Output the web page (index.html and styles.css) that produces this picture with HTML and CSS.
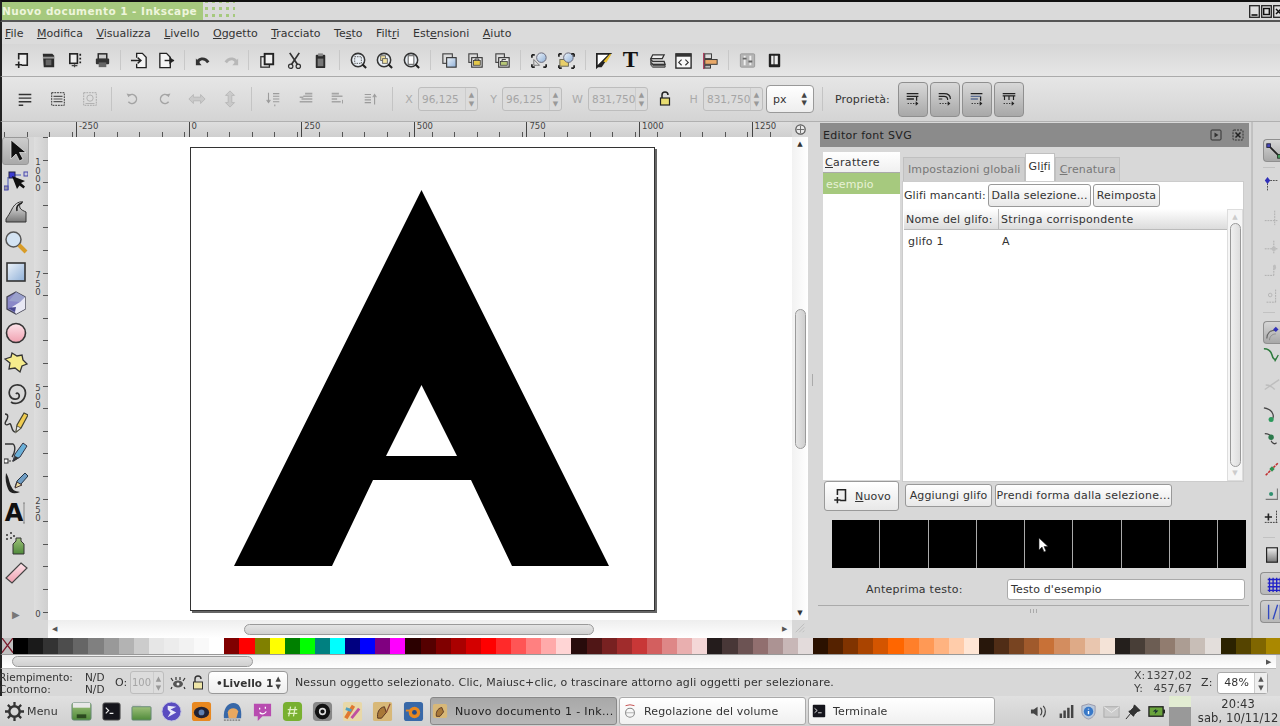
FILE: index.html
```html
<!DOCTYPE html>
<html lang="it">
<head>
<meta charset="utf-8">
<title>Nuovo documento 1 - Inkscape</title>
<link rel="stylesheet" href="styles.css">
</head>
<body>
<svg class="defs" width="0" height="0" aria-hidden="true">
<defs>
<linearGradient id="gb" x1="0" y1="0" x2="1" y2="1"><stop offset="0" stop-color="#eef4fa"/><stop offset="1" stop-color="#8fb0d8"/></linearGradient>
<linearGradient id="gp" x1="0" y1="0" x2="0" y2="1"><stop offset="0" stop-color="#fde4ea"/><stop offset="1" stop-color="#f0a0b0"/></linearGradient>
<linearGradient id="gg" x1="0" y1="0" x2="0" y2="1"><stop offset="0" stop-color="#eee"/><stop offset="1" stop-color="#777"/></linearGradient>
<linearGradient id="gt" x1="0" y1="0" x2="0" y2="1"><stop offset="0" stop-color="#9dc07a"/><stop offset="1" stop-color="#4f8a3a"/></linearGradient>
</defs>
</svg>
<div class="win">
  <header class="titlebar">
    <div class="title">Nuovo documento 1 - Inkscape</div>
    <div class="dither"></div>
    <div class="winbtns">
      <span class="wb"><svg viewBox="0 0 11 13"><rect x=".7" y=".7" width="9.6" height="11.6" fill="#ddd" stroke="#222" stroke-width="1.3"/><path d="M2.5 10h6" stroke="#111" stroke-width="1.6"/></svg></span>
      <span class="wb"><svg viewBox="0 0 11 13"><rect x=".7" y=".7" width="9.6" height="11.6" fill="#ddd" stroke="#222" stroke-width="1.3"/><rect x="2.7" y="3.5" width="5.6" height="6" fill="none" stroke="#111" stroke-width="1.4"/></svg></span>
      <span class="wb"><svg viewBox="0 0 11 13"><rect x=".7" y=".7" width="9.6" height="11.6" fill="#ddd" stroke="#222" stroke-width="1.3"/><path d="M3 4l5 5M8 4l-5 5" stroke="#111" stroke-width="1.5"/></svg></span>
    </div>
  </header>

  <nav class="menubar">
    <span><u>F</u>ile</span><span><u>M</u>odifica</span><span><u>V</u>isualizza</span><span><u>L</u>ivello</span><span><u>O</u>ggetto</span><span><u>T</u>racciato</span><span>Te<u>s</u>to</span><span>Filt<u>r</u>i</span><span>Est<u>e</u>nsioni</span><span><u>A</u>iuto</span>
  </nav>

  <div class="cmdbar">
    <i class="ti"><svg viewBox="0 0 20 20"><path d="M6 9V3h9v12H9" fill="#eee" stroke="#222" stroke-width="1.7"/><path d="M2.500 14.500h7M6 11v7" stroke="#222" stroke-width="1.700"/></svg></i>
    <i class="ti"><svg viewBox="0 0 20 20"><path d="M4 3h10l2 2v12H5z" fill="#2c2c2c"/><rect x="4" y="6" width="12" height="2" fill="#999"/><rect x="7" y="9" width="6" height="6" fill="#666"/></svg></i>
    <i class="ti"><svg viewBox="0 0 20 20"><rect x="4" y="3" width="8" height="10" fill="#eee" stroke="#222" stroke-width="1.7"/><path d="M15 3v2M15 7v2M15 11v2" stroke="#222" stroke-width="1.800"/><path d="M6 15.500h6M9 14v3" stroke="#444" stroke-width="1.300"/></svg></i>
    <i class="ti"><svg viewBox="0 0 20 20"><rect x="5.500" y="3" width="9" height="6" fill="#ccc" stroke="#222" stroke-width="1.500"/><rect x="3" y="8" width="14" height="6" rx="1" fill="#333"/><rect x="6" y="12" width="8" height="5" fill="#666"/></svg></i>
    <b class="sp"></b>
    <i class="ti"><svg viewBox="0 0 20 20"><path d="M7 7V2.500h6l4 4v11H7v-4" fill="#f4f4f4" stroke="#222" stroke-width="1.400"/><path d="M1 10h10M8 7l3.500 3L8 13" fill="none" stroke="#222" stroke-width="1.500"/></svg></i>
    <i class="ti"><svg viewBox="0 0 20 20"><path d="M3 2.500h7l4 4v11H3z" fill="#f4f4f4" stroke="#222" stroke-width="1.400"/><path d="M8 10h10" stroke="#222" stroke-width="1.500"/><path d="M13 6l5 4-5 4z" fill="#222"/></svg></i>
    <b class="sp"></b>
    <i class="ti"><svg viewBox="0 0 20 20"><path d="M4 13c0-5 7-7 11-1" fill="none" stroke="#333" stroke-width="3"/><path d="M2 8v7h6z" fill="#333"/></svg></i>
    <i class="ti dim"><svg viewBox="0 0 20 20"><path d="M16 13c0-5-7-7-11-1" fill="none" stroke="#999" stroke-width="3"/><path d="M18 8v7h-6z" fill="#999"/></svg></i>
    <b class="sp"></b>
    <i class="ti"><svg viewBox="0 0 20 20"><rect x="3" y="6" width="9" height="11" fill="#eee" stroke="#333" stroke-width="1.400"/><rect x="7" y="3" width="9" height="11" fill="#eee" stroke="#222" stroke-width="2"/></svg></i>
    <i class="ti"><svg viewBox="0 0 20 20"><path d="M5 2l8 12M15 2L7 14" stroke="#333" stroke-width="1.800"/><circle cx="6" cy="16" r="2.300" fill="none" stroke="#333" stroke-width="1.300"/><circle cx="14" cy="16" r="2.300" fill="none" stroke="#333" stroke-width="1.300"/></svg></i>
    <i class="ti"><svg viewBox="0 0 20 20"><rect x="5" y="4" width="10" height="14" rx="1" fill="#2c2c2c"/><rect x="7.500" y="2.500" width="5" height="3" fill="#888"/><rect x="7" y="8" width="6" height="8" fill="#777"/></svg></i>
    <b class="sp"></b>
    <i class="ti"><svg viewBox="0 0 20 20"><circle cx="9.500" cy="9.500" r="7" fill="#e8eef4" stroke="#333" stroke-width="1.600"/><rect x="6" y="6" width="7" height="7" fill="none" stroke="#555" stroke-dasharray="1.500 1"/><path d="M14 14l4 4" stroke="#222" stroke-width="2.200"/></svg></i>
    <i class="ti"><svg viewBox="0 0 20 20"><circle cx="9.500" cy="9.500" r="7" fill="#e8eef4" stroke="#333" stroke-width="1.600"/><rect x="6" y="5" width="5" height="5" fill="#f2e3a0" stroke="#666"/><rect x="8" y="8" width="5" height="5" fill="#f2e3a0" stroke="#666"/><path d="M14 14l4 4" stroke="#222" stroke-width="2.200"/></svg></i>
    <i class="ti"><svg viewBox="0 0 20 20"><circle cx="9.500" cy="9.500" r="7" fill="#e8eef4" stroke="#333" stroke-width="1.600"/><rect x="6.500" y="5" width="6" height="9" fill="#fff" stroke="#555"/><path d="M14 14l4 4" stroke="#222" stroke-width="2.200"/></svg></i>
    <b class="sp"></b>
    <i class="ti"><svg viewBox="0 0 20 20"><rect x="3" y="3" width="10" height="10" fill="#ddd" stroke="#444" stroke-width="1.200"/><rect x="7" y="7" width="10" height="10" fill="url(#gb)" stroke="#333" stroke-width="1.200"/></svg></i>
    <i class="ti"><svg viewBox="0 0 20 20"><rect x="3" y="3" width="9" height="9" fill="#ddd" stroke="#444" stroke-width="1.200"/><rect x="6" y="7" width="11" height="10" fill="#eee" stroke="#333" stroke-width="1.200"/><rect x="8" y="10" width="7" height="5" fill="#e4c84a" stroke="#333" stroke-width=".8"/><path d="M9.500 10V8.500h4V10" fill="none" stroke="#333"/></svg></i>
    <i class="ti"><svg viewBox="0 0 20 20"><rect x="3" y="3" width="9" height="9" fill="#ddd" stroke="#444" stroke-width="1.200"/><rect x="6" y="7" width="11" height="10" fill="#eee" stroke="#333" stroke-width="1.200"/><rect x="8" y="11" width="7" height="4" fill="#b8c878" stroke="#333" stroke-width=".8"/><path d="M9.500 11V9h4" fill="none" stroke="#333"/></svg></i>
    <b class="sp"></b>
    <i class="ti"><svg viewBox="0 0 20 20"><path d="M4 15h8" stroke="#aaa" stroke-dasharray="2 2"/><circle cx="12" cy="7" r="5" fill="url(#gb)" stroke="#667"/><path d="M2 17v-3M2 17h3M2 4h3M2 4v3M17 17h-3M17 17v-3" stroke="#222" stroke-width="1.800"/><path d="M4 9l6 6H4z" fill="#ddd" stroke="#777"/></svg></i>
    <i class="ti"><svg viewBox="0 0 20 20"><rect x="3" y="9" width="9" height="7" fill="#e8cf6a" stroke="#665"/><circle cx="12" cy="7" r="5" fill="url(#gb)" stroke="#667"/><path d="M2 18v-3M2 18h3M2 3h3M2 3v3M18 18h-3M18 18v-3M18 3h-3M18 3v3" stroke="#222" stroke-width="1.800"/></svg></i>
    <b class="sp"></b>
    <i class="ti"><svg viewBox="0 0 20 20"><path d="M3 3h14L3 17z" fill="#fff" stroke="#222" stroke-width="1.800"/><path d="M18 3L8 17H3z" fill="#222"/><path d="M17 3l1 1-5 8-3-1z" fill="#e8c030"/></svg></i>
    <i class="ti"><span class="tee">T</span></i>
    <i class="ti"><svg viewBox="0 0 20 20"><path d="M5 4h12l-2 4H3z" fill="#eee" stroke="#333" stroke-width="1.300"/><path d="M3 9l2 2h12l1 3H5l-2-2z" fill="#ccc" stroke="#333" stroke-width="1.300"/><path d="M3 13l2 2h13v2H5l-2-2z" fill="#aaa" stroke="#333"/></svg></i>
    <i class="ti"><svg viewBox="0 0 20 20"><rect x="2" y="3" width="16" height="15" fill="#f8f8f8" stroke="#222" stroke-width="1.400"/><rect x="2" y="3" width="16" height="3" fill="#333"/><path d="M8 9l-3 3 3 3M12 9l3 3-3 3" fill="none" stroke="#333" stroke-width="1.200"/></svg></i>
    <i class="ti"><svg viewBox="0 0 20 20"><path d="M3 2v17" stroke="#b04060" stroke-width="1.800"/><rect x="4" y="3" width="7" height="5" fill="#ddd" stroke="#333"/><rect x="4" y="9" width="13" height="5" fill="#e8a868" stroke="#333"/><rect x="4" y="15" width="6" height="3" fill="#bbb" stroke="#333"/></svg></i>
    <b class="sp"></b>
    <i class="ti"><svg viewBox="0 0 20 20"><rect x="2.500" y="3" width="15" height="14" rx="1" fill="#b5b5b5" stroke="#999"/><path d="M7 5v10M13 5v10" stroke="#eee" stroke-width="2"/><path d="M5 8h4M11 11h4" stroke="#666" stroke-width="2"/></svg></i>
    <i class="ti"><svg viewBox="0 0 20 20"><rect x="4" y="3" width="12" height="14" rx="1" fill="#222"/><rect x="6.500" y="5" width="2.500" height="9" fill="#eee"/><rect x="10" y="5" width="3.500" height="9" fill="#eee"/></svg></i>
  </div>

  <div class="ctlbar">
    <i class="tc"><svg viewBox="0 0 20 20"><path d="M3 5h14M3 9h14M3 13h14M3 17h5" stroke="#333" stroke-width="1.600"/></svg></i>
    <i class="tc"><svg viewBox="0 0 20 20"><rect x="3" y="3" width="14" height="14" fill="#ddd" stroke="#222" stroke-dasharray="2 1"/><path d="M5 7h10M5 10h10M5 13h10" stroke="#555" stroke-width="1.300"/></svg></i>
    <i class="tc dim"><svg viewBox="0 0 20 20"><rect x="3" y="3" width="14" height="14" fill="#ddd" stroke="#777" stroke-dasharray="2 1"/><circle cx="10" cy="9" r="3.500" fill="none" stroke="#888"/><path d="M5 15h10" stroke="#888"/></svg></i>
    <b class="spc"></b>
    <i class="tc dim"><svg viewBox="0 0 20 20"><path d="M7 6a5 5 0 1 1-1 7" fill="none" stroke="#777" stroke-width="1.600"/><path d="M4 4l5 1-3 3z" fill="#777"/></svg></i>
    <i class="tc dim"><svg viewBox="0 0 20 20"><path d="M13 6a5 5 0 1 0 1 7" fill="none" stroke="#777" stroke-width="1.600"/><path d="M16 4l-5 1 3 3z" fill="#777"/></svg></i>
    <i class="tc dim"><svg viewBox="0 0 20 20"><path d="M1 10l5-5v3h8V5l5 5-5 5v-3H6v3z" fill="#bbb" stroke="#999"/></svg></i>
    <i class="tc dim"><svg viewBox="0 0 20 20"><path d="M10 1l5 5h-3v8h3l-5 5-5-5h3V6H5z" fill="#bbb" stroke="#999"/></svg></i>
    <b class="spc spc2"></b>
    <i class="tc dim"><svg viewBox="0 0 20 20"><path d="M5 3v10M3 11l2 3 2-3M10 4h7M10 7h7M10 10h7M10 13h7M12 16v2" fill="none" stroke="#666" stroke-width="1.200"/></svg></i>
    <i class="tc dim"><svg viewBox="0 0 20 20"><path d="M9 4h8M7 7h10M5 10h12M3 13h14M3 8h4" stroke="#777" stroke-width="1.800"/></svg></i>
    <i class="tc dim"><svg viewBox="0 0 20 20"><path d="M3 4h8M3 7h12M3 10h6M3 13h10" stroke="#777" stroke-width="1.800"/><path d="M15 11v4" stroke="#666"/></svg></i>
    <i class="tc dim"><svg viewBox="0 0 20 20"><path d="M3 5h7M3 8h7M3 11h7M3 14h7" stroke="#666" stroke-width="1.200"/><path d="M14 16V5M12 8l2-3 2 3" fill="none" stroke="#666" stroke-width="1.200"/></svg></i>
    <b class="spd"></b>
    <label class="cl clx">X</label><span class="spin"><span class="val">96,125</span><span class="arr">▲<br>▼</span></span>
    <label class="cl">Y</label><span class="spin"><span class="val">96,125</span><span class="arr">▲<br>▼</span></span>
    <label class="cl clw">W</label><span class="spin"><span class="val">831,750</span><span class="arr">▲<br>▼</span></span>
    <i class="lock"><svg viewBox="0 0 16 16"><path d="M5 7V4a3 3 0 0 1 6 0" fill="none" stroke="#222" stroke-width="1.500"/><rect x="3.500" y="7" width="9" height="7" fill="#e8dc70" stroke="#222" stroke-width="1.200"/></svg></i>
    <label class="cl clh">H</label><span class="spin"><span class="val">831,750</span><span class="arr">▲<br>▼</span></span>
    <span class="combo px"><span>px</span><span class="arr2">▲<br>▼</span></span>
    <b class="spe"></b>
    <span class="prop">Proprietà:</span>
    <div class="toggles">
      <i class="tog"><svg viewBox="0 0 20 20"><path d="M3 4h13M3 7h13M3 10h8M14 7v5" fill="none" stroke="#222" stroke-width="1.400"/><path d="M4 15h11" stroke="#222" stroke-dasharray="1.500 1.500"/><path d="M13 12.500l3 2.500-3 2.500z" fill="#222"/></svg></i>
      <i class="tog"><svg viewBox="0 0 20 20"><path d="M3 4h6c4 0 7 2 7 6M3 7h6c2 0 4 1 4 4M3 10h4" fill="none" stroke="#222" stroke-width="1.300"/><path d="M4 15h11" stroke="#222" stroke-dasharray="1.500 1.500"/><path d="M13 12.500l3 2.500-3 2.500z" fill="#222"/></svg></i>
      <i class="tog"><svg viewBox="0 0 20 20"><path d="M3 4h13M14 7v5" fill="none" stroke="#222" stroke-width="1.400"/><path d="M3 7h11M3 10h8" stroke="#5a6c90" stroke-width="1.400"/><path d="M4 15h11" stroke="#222" stroke-dasharray="1.500 1.500"/><path d="M13 12.500l3 2.500-3 2.500z" fill="#222"/></svg></i>
      <i class="tog"><svg viewBox="0 0 20 20"><path d="M3 4h14M3 6.500h14M5 6v5M10 6v5M15 6v5" fill="none" stroke="#222" stroke-width="1.300"/><path d="M4 15h11" stroke="#222" stroke-dasharray="1.500 1.500"/><path d="M13 12.500l3 2.500-3 2.500z" fill="#222"/></svg></i>
    </div>
  </div>

  <main class="main">
    <div class="toprul">
      <span class="rl">-250</span><span class="rl">0</span><span class="rl">250</span><span class="rl">500</span><span class="rl">750</span><span class="rl">1000</span><span class="rl">1250</span>
    </div>
    <div class="corner"><svg viewBox="0 0 16 16"><circle cx="8" cy="8" r="5" fill="#e8e8e8" stroke="#555" stroke-width="1.300"/><path d="M8 4v8M4 8h8" stroke="#666"/></svg></div>

    <aside class="tools">
      <i class="tool on"><svg viewBox="0 0 24 24"><path d="M7 1v19l5-5 3.500 7 3.500-2-3.500-6.500H22z" fill="#111" stroke="#eee" stroke-width=".7"/></svg></i>
      <i class="tool"><svg viewBox="0 0 24 24"><path d="M4 7v13M7 5h10" stroke="#4454b8"/><rect x="5" y="2" width="6" height="6" fill="#3b3bd0" stroke="#224"/><rect x="0" y="16" width="4" height="4" fill="#99a" stroke="#44a"/><rect x="20" y="2" width="4" height="4" fill="#ccd" stroke="#44a"/><path d="M8 6l5 13 2.500-3.500 4 3 1.500-2-4-3.500 4-2z" fill="#111"/></svg></i>
      <i class="tool"><svg viewBox="0 0 24 24"><path d="M2 22v-3c2-3 4-6 6-10s6-8 11-7c-3 1-4 3-3 6 1 2 4 3 6 4v10z" fill="url(#gg)" stroke="#333"/><path d="M13 11c-1-4 1-7 5-8" fill="none" stroke="#222" stroke-width="1.500"/></svg></i>
      <i class="tool"><svg viewBox="0 0 24 24"><circle cx="9.500" cy="9.500" r="7.500" fill="#d3e3f3" stroke="#555" stroke-width="1.500"/><path d="M15 15l7 7" stroke="#d89c28" stroke-width="4"/></svg></i>
      <i class="tool"><svg viewBox="0 0 24 24"><rect x="3" y="3" width="18" height="18" fill="url(#gb)" stroke="#333" stroke-width="1.600"/></svg></i>
      <i class="tool"><svg viewBox="0 0 24 24"><path d="M12 1l9 5v12l-9 5-9-5V6z" fill="#8a88c8" stroke="#445" stroke-width="1.300"/><path d="M12 1l9 5-5 5-11-1z" fill="#9aa0cc"/><path d="M8 16l8-5 5-5v12l-9 5z" fill="#e8e8f4"/><path d="M4 17l8-1-1 5z" fill="#4a4890"/></svg></i>
      <i class="tool"><svg viewBox="0 0 24 24"><circle cx="12" cy="12" r="9.500" fill="url(#gp)" stroke="#333" stroke-width="1.600"/></svg></i>
      <i class="tool"><svg viewBox="0 0 24 24"><path d="M8 2l5 3 5-1 1 5 4 4-5 2-2 6-5-4-6 1 1-6-5-4 6-2z" fill="#f6ec8c" stroke="#333" stroke-width="1.300"/></svg></i>
      <i class="tool"><svg viewBox="0 0 24 24"><path d="M12 13c1-2 4 0 3 3s-7 3-9-1 0-10 6-11 11 4 9 11-10 9-14 6" fill="none" stroke="#333" stroke-width="1.700"/></svg></i>
      <i class="tool"><svg viewBox="0 0 24 24"><path d="M1 3c4 0 3 4 1 7s0 5 3 3 2 8 6 8" fill="none" stroke="#333" stroke-width="1.400"/><path d="M12 21l1-7 7-12 4 2-7 13z" fill="#f0cc50" stroke="#443" stroke-width="1.200"/><path d="M12 21l1-6 4 2z" fill="#eee" stroke="#443" stroke-width=".8"/></svg></i>
      <i class="tool"><svg viewBox="0 0 24 24"><path d="M1 3h8c3 2 2 9-1 13" fill="none" stroke="#333" stroke-width="1.400"/><path d="M2 20h7" stroke="#333" stroke-dasharray="2 1"/><rect x="0" y="18" width="4" height="4" fill="#fff" stroke="#222"/><path d="M9 20l2-7 8-11 4 3-7 11z" fill="#6ab0d8" stroke="#334"/><path d="M9 21l2-6 4 2z" fill="#333"/></svg></i>
      <i class="tool"><svg viewBox="0 0 24 24"><path d="M2 2c3 4 3 9 5 13s3 5 9 6c-5 2-10 2-12-3S1 8 2 2z" fill="#222"/><path d="M11 16l2-6 8-8 3 3-7 8z" fill="#6f9dc4" stroke="#234"/><path d="M11 17l2-6 5 3z" fill="#e8d8a0" stroke="#433"/></svg></i>
      <i class="tool"><span class="aglyph">A</span><svg class="caret" viewBox="0 0 4 22"><path d="M1 1h2M2 1v20M1 21h2" stroke="#888"/></svg></i>
      <i class="tool"><svg viewBox="0 0 24 24"><path d="M2 4h2M6 2h2M2 8h2M6 7h2M9 5h2" stroke="#333" stroke-width="1.400"/><path d="M12 10V7h5v3l3 3v10H9V13z" fill="url(#gt)" stroke="#333"/></svg></i>
      <i class="tool"><svg viewBox="0 0 24 24"><path d="M17 2l6 5L8 22l-6-5z" fill="url(#gp)" stroke="#444" stroke-width="1.200"/></svg></i>
      <i class="toolmore">▶</i>
    </aside>

    <div class="vrul"><span class="vl">1<br>0<br>0<br>0</span><span class="vl">7<br>5<br>0</span><span class="vl">5<br>0<br>0</span><span class="vl">2<br>5<br>0</span><span class="vl">0</span></div>

    <section class="canvas">
      <div class="page"></div>
      <svg class="artwork" viewBox="0 0 376 377"><path fill-rule="evenodd" d="M187.500 0L375 376h-97l-41-86h-98l-41 86H0zM187.500 195l-35.500 71h71z" fill="#000"/></svg>
    </section>

    <div class="vscroll"><span class="sa">▲</span><span class="vthumb"></span><span class="sa sb">▼</span></div>
    <div class="hscroll"><span class="sh">◀</span><span class="hthumb"></span><span class="sh sr">▶</span></div>
    <div class="sizer"><svg viewBox="0 0 14 14"><path d="M12 2L2 12M12 6l-6 6M12 10l-2 2" stroke="#bbb"/></svg></div>

    <div class="handle"></div>

    <section class="dock">
      <div class="docktitle"><span>Editor font SVG</span>
        <span class="dtb"><svg viewBox="0 0 12 12"><rect x="1" y="1" width="10" height="10" rx="1" fill="none" stroke="#333"/><path d="M4.500 3.500l4 2.500-4 2.500z" fill="#333"/></svg><svg viewBox="0 0 12 12"><rect x="1" y="1" width="10" height="10" rx="1" fill="none" stroke="#333" stroke-dasharray="2 1"/><path d="M3.500 3.500l5 5M8.500 3.500l-5 5" stroke="#222" stroke-width="1.500"/></svg></span>
      </div>
      <div class="dockbody">
        <div class="leftcol">
          <div class="fontlist">
            <div class="flhead"><u>C</u>arattere</div>
            <div class="flsel">esempio</div>
          </div>
          <button class="btn nuovo"><svg viewBox="0 0 20 20"><path d="M6 9V3h9v12H9" fill="#eee" stroke="#222" stroke-width="1.700"/><path d="M2.500 14.500h7M6 11v7" stroke="#222" stroke-width="1.700"/></svg><span><u>N</u>uovo</span></button>
        </div>
        <div class="rightcol">
          <div class="tabs">
            <span class="tab">Impostazioni globali</span><span class="tab act">Gl<u>i</u>fi</span><span class="tab"><u>C</u>renatura</span>
          </div>
          <div class="panel">
            <div class="missing"><span class="mlabel">Glifi mancanti:</span><button class="btn">Dalla selezione...</button><button class="btn">Reimposta</button></div>
            <div class="table">
              <div class="tblmain">
                <div class="thead"><span class="c1">Nome del glifo:</span><span class="c2">Stringa corrispondente</span></div>
                <div class="trow"><span class="c1">glifo 1</span><span class="c2">A</span></div>
              </div>
              <div class="tscroll"><span class="sa">▲</span><span class="tthumb"></span><span class="sa sb">▼</span></div>
            </div>
          </div>
          <div class="actions"><button class="btn">Aggiungi glifo</button><button class="btn">Prendi forma dalla selezione...</button></div>
        </div>
      </div>
      <div class="strip">
        <span></span><span></span><span></span><span></span><span></span><span></span><span></span><span></span><span></span>
        <svg class="cursor" viewBox="0 0 10 16"><path d="M1 1v12l3-3 2 5 2-1-2-4.500h4z" fill="#fff" stroke="#222" stroke-width=".6"/></svg>
      </div>
      <div class="previewrow"><label>Anteprima testo:</label><span class="entry">Testo d'esempio</span></div>
      <div class="dockfoot"><span class="grip"></span></div>
    </section>

    <aside class="snapbar">
      <i class="rb on r0"><svg viewBox="0 0 20 20"><path d="M4 4l12 12" stroke="#222" stroke-width="2"/><rect x="2" y="2" width="4" height="4" fill="#4848c0" stroke="#223"/><rect x="14" y="14" width="4" height="4" fill="#48a060" stroke="#232"/></svg></i>
      <b class="rs r4"></b>
      <i class="rb r8"><svg viewBox="0 0 20 20"><path d="M5 5h11M5 5v12" stroke="#444" stroke-dasharray="2 1"/><path d="M5 1l3 4-3 4-3-4z" fill="#3030b8"/></svg></i>
      <i class="rb r14 fade"><svg viewBox="0 0 20 20"><path d="M2 14h14M13 3v16" stroke="#888" stroke-dasharray="2 1"/></svg></i>
      <i class="rb r12 fade"><svg viewBox="0 0 20 20"><path d="M2 12h14M12 3v14" stroke="#888" stroke-dasharray="2 1"/><circle cx="12" cy="12" r="2.500" fill="#aaa"/></svg></i>
      <i class="rb r5 fade"><svg viewBox="0 0 20 20"><path d="M2 16h10M12 5v11" stroke="#888" stroke-dasharray="2 1"/><ellipse cx="13" cy="7" rx="1.500" ry="3" fill="#aaa"/></svg></i>
      <i class="rb r7 fade"><svg viewBox="0 0 20 20"><path d="M4 18h10M14 4v14" stroke="#888" stroke-dasharray="2 1"/><circle cx="8" cy="10" r="2" fill="none" stroke="#999"/></svg></i>
      <b class="rs r8"></b>
      <i class="rb on r8"><svg viewBox="0 0 20 20"><path d="M2 16c0-6 4-9 9-9" fill="none" stroke="#666" stroke-width="1.300"/><path d="M5 18c0-4 3-7 7-7" fill="none" stroke="#888"/><path d="M12 3l3 3-3 3-3-3z" fill="#3030b8"/></svg></i>
      <i class="rb r0"><svg viewBox="0 0 20 20"><path d="M1 3c6 0 8 3 9 7s3 6 4 4" fill="none" stroke="#2c7a3c" stroke-width="1.700"/><path d="M13 17l4-7" stroke="#2c7a3c" stroke-width="1.500"/></svg></i>
      <i class="rb r12 fade"><svg viewBox="0 0 20 20"><path d="M2 15L18 4M3 10c5 0 7 2 10 5" fill="none" stroke="#aaa" stroke-width="1.500"/></svg></i>
      <i class="rb r12"><svg viewBox="0 0 20 20"><path d="M1 2c6 1 9 4 10 7s0 5-1 6" fill="none" stroke="#444" stroke-width="1.400"/><circle cx="9" cy="15" r="2.800" fill="#2c9a5c"/></svg></i>
      <i class="rb r6"><svg viewBox="0 0 20 20"><path d="M2 4c4 0 7 2 8 5M9 12c1 2 4 5 6 2" fill="none" stroke="#444" stroke-width="1.400"/><circle cx="9" cy="8" r="3" fill="#2c7a4c"/></svg></i>
      <i class="rb r12"><svg viewBox="0 0 20 20"><path d="M3 17L17 3" stroke="#c03030" stroke-width="1.700" stroke-dasharray="3 1"/><path d="M10 7l3 3-3 3-3-3z" fill="#309050"/></svg></i>
      <i class="rb r7"><svg viewBox="0 0 20 20"><path d="M3 16h13V4" fill="none" stroke="#777" stroke-width="1.200"/><circle cx="9" cy="10" r="2.300" fill="#309070"/></svg></i>
      <i class="rb r5"><svg viewBox="0 0 20 20"><path d="M2 10h8M6 6v8" stroke="#222" stroke-width="1.800"/><path d="M2 16h14M15 3v13" stroke="#333" stroke-dasharray="2 1"/></svg></i>
      <b class="rs r11"></b>
      <i class="rb r8"><svg viewBox="0 0 20 20"><rect x="4" y="2" width="12" height="16" fill="url(#gg)" stroke="#222" stroke-width="1.300"/></svg></i>
      <i class="rb on r8 blue"><svg viewBox="0 0 20 20"><path d="M3 5h16M3 9h16M3 13h16M3 17h16M5 3v16M9 3v16M13 3v16M17 3v16" stroke="#2020c8" stroke-width="1.500"/></svg></i>
      <i class="rb on r5 blue"><svg viewBox="0 0 20 20"><path d="M4 2v16M9 18l5-16M17 2v16" stroke="#3048c0" stroke-width="1.500"/></svg></i>
    </aside>
  </main>

  <div class="palette">
    <span class="noswatch"><svg viewBox="0 0 12 16"><path d="M0 0l12 16M12 0L0 16" stroke="#7a1a2a" stroke-width="1.400"/></svg></span>
    <span style="background:#000"></span><span style="background:#1a1a1a"></span><span style="background:#333"></span><span style="background:#4d4d4d"></span><span style="background:#666"></span><span style="background:#808080"></span><span style="background:#999"></span><span style="background:#b3b3b3"></span><span style="background:#ccc"></span><span style="background:#e6e6e6"></span><span style="background:#ececec"></span><span style="background:#f2f2f2"></span><span style="background:#f9f9f9"></span><span style="background:#fff"></span>
    <span style="background:#800000"></span><span style="background:#f00"></span><span style="background:#808000"></span><span style="background:#ff0"></span><span style="background:#008000"></span><span style="background:#0f0"></span><span style="background:#008080"></span><span style="background:#0ff"></span><span style="background:#000080"></span><span style="background:#00f"></span><span style="background:#800080"></span><span style="background:#f0f"></span>
    <span style="background:#2b0000"></span><span style="background:#550000"></span><span style="background:#800000"></span><span style="background:#aa0000"></span><span style="background:#d40000"></span><span style="background:#f00"></span><span style="background:#ff2a2a"></span><span style="background:#f55"></span><span style="background:#ff8080"></span><span style="background:#faa"></span><span style="background:#ffd5d5"></span>
    <span style="background:#280b0b"></span><span style="background:#501616"></span><span style="background:#782121"></span><span style="background:#a02c2c"></span><span style="background:#c83737"></span><span style="background:#d35f5f"></span><span style="background:#de8787"></span><span style="background:#e9afaf"></span><span style="background:#f4d7d7"></span>
    <span style="background:#241c1c"></span><span style="background:#483737"></span><span style="background:#6c5353"></span><span style="background:#916f6f"></span><span style="background:#ac9393"></span><span style="background:#c8b7b7"></span><span style="background:#e3dbdb"></span>
    <span style="background:#2b1100"></span><span style="background:#552200"></span><span style="background:#803300"></span><span style="background:#aa4400"></span><span style="background:#d45500"></span><span style="background:#f60"></span><span style="background:#ff7f2a"></span><span style="background:#f95"></span><span style="background:#ffb380"></span><span style="background:#fca"></span><span style="background:#ffe6d5"></span>
    <span style="background:#28170b"></span><span style="background:#502d16"></span><span style="background:#784421"></span><span style="background:#a05a2c"></span><span style="background:#c87137"></span><span style="background:#d38d5f"></span><span style="background:#deaa87"></span><span style="background:#e9c6af"></span><span style="background:#f4e3d7"></span>
    <span style="background:#241f1c"></span><span style="background:#483e37"></span><span style="background:#6c5d53"></span><span style="background:#917c6f"></span><span style="background:#ac9d93"></span><span style="background:#c8beb7"></span><span style="background:#e3dedb"></span>
    <span style="background:#2b2200"></span><span style="background:#554400"></span><span style="background:#806600"></span><span style="background:#aa8800"></span>
  </div>
  <div class="palscroll"><span class="palthumb"></span><span class="sh palarrow">▶</span></div>

  <div class="status">
    <div class="fs"><div><span>Riempimento:</span><span>N/D</span></div><div><span>Contorno:</span><span>N/D</span></div></div>
    <label class="op">O:</label><span class="spin small"><span class="val">100</span><span class="arr">▲<br>▼</span></span>
    <i class="si eye"><svg viewBox="0 0 16 16"><ellipse cx="8" cy="9" rx="5" ry="3.500" fill="#555"/><circle cx="8" cy="9" r="1.500" fill="#eee"/><path d="M3 6L1 3M6 5V2M10 5V2M13 6l2-3M2 12l-1 2M14 12l1 2" stroke="#333" stroke-width="1.200"/></svg></i>
    <i class="si lock2"><svg viewBox="0 0 16 16"><path d="M5 7V4a3 3 0 0 1 6 0" fill="none" stroke="#333" stroke-width="1.400"/><rect x="3.500" y="7" width="9" height="7" fill="#efe6a8" stroke="#333"/></svg></i>
    <span class="combo lvl"><span>•Livello 1</span><span class="arr2">▲<br>▼</span></span>
    <span class="msg">Nessun oggetto selezionato. Clic, Maiusc+clic, o trascinare attorno agli oggetti per selezionare.</span>
    <div class="coords"><div><span>X:</span><span>1327,02</span></div><div><span>Y:</span><span>457,67</span></div></div>
    <label class="zl">Z:</label>
    <span class="zoomspin"><span>48%</span><span class="arr">▲<br>▼</span></span>
  </div>

  <footer class="taskbar">
    <span class="menubtn"><svg viewBox="0 0 20 20"><circle cx="10" cy="10" r="5.500" fill="none" stroke="#333" stroke-width="2.600"/><path d="M10 0v4M10 16v4M0 10h4M16 10h4M3 3l3 3M14 14l3 3M17 3l-3 3M6 14l-3 3" stroke="#333" stroke-width="2.400"/></svg>Menu</span>
    <div class="launch">
      <i class="la"><svg viewBox="0 0 22 22"><rect x="1" y="2" width="20" height="18" rx="2" fill="url(#gt)" stroke="#687"/><rect x="2" y="2" width="18" height="5" fill="#e8e8e8"/><rect x="6" y="14" width="10" height="4" fill="#2c4a20"/></svg></i>
      <i class="la"><svg viewBox="0 0 22 22"><rect x="2" y="2" width="18" height="18" rx="2" fill="#15151c" stroke="#555"/><path d="M5 7l3 3-3 3M9 13h4" fill="none" stroke="#eee" stroke-width="1.200"/></svg></i>
      <i class="la"><svg viewBox="0 0 22 22"><path d="M1 7h8l2-3H1z" fill="#ccc"/><rect x="1" y="6" width="20" height="14" rx="1" fill="url(#gt)" stroke="#687"/></svg></i>
      <i class="la"><svg viewBox="0 0 22 22"><circle cx="11" cy="11" r="10" fill="#5a4cc0" stroke="#c0c0e0"/><path d="M7 5l9 1-6 3 6 3-9 5 3-5-3-3z" fill="#e8e8f8"/></svg></i>
      <i class="la"><svg viewBox="0 0 22 22"><rect x="1" y="1" width="20" height="20" rx="3" fill="#e88820"/><ellipse cx="11" cy="12" rx="8" ry="6" fill="#223"/><circle cx="11" cy="12" r="3" fill="#6080b0"/></svg></i>
      <i class="la"><svg viewBox="0 0 22 22"><path d="M2 18C1 8 6 2 12 2s9 5 8 16z" fill="#3868a8"/><path d="M6 12c1-5 9-6 11-1l-2 7H7z" fill="#e8a860"/><path d="M2 20h18" stroke="#555" stroke-dasharray="2 1"/></svg></i>
      <i class="la"><svg viewBox="0 0 22 22"><path d="M2 3h18v13H11l-5 5v-5H2z" fill="#b84cb0"/><path d="M8 7v2M8 12c2 2 5 2 7-1M14 6v2" stroke="#fff" stroke-width="1.300" fill="none"/></svg></i>
      <i class="la"><svg viewBox="0 0 22 22"><rect x="1" y="1" width="20" height="20" rx="4" fill="#78b030"/><path d="M9 6l-2 10M14 6l-2 10M6 9h10M6 13h10" stroke="#dff0c0" stroke-width="1.300"/></svg></i>
      <i class="la"><svg viewBox="0 0 22 22"><rect x="1" y="1" width="20" height="20" rx="4" fill="#888"/><circle cx="11" cy="11" r="8" fill="#111"/><circle cx="11" cy="11" r="3" fill="none" stroke="#ddd" stroke-width="1.600"/></svg></i>
      <i class="la"><svg viewBox="0 0 22 22"><rect x="1" y="1" width="20" height="20" rx="2" fill="#e8d8a8"/><path d="M4 18L12 5" stroke="#e07830" stroke-width="4"/><path d="M10 18L18 8" stroke="#c050a0" stroke-width="3"/><path d="M4 8l6 2" stroke="#50a0c0" stroke-width="3"/></svg></i>
      <i class="la"><svg viewBox="0 0 22 22"><rect x="1" y="1" width="20" height="20" rx="2" fill="#d8b878"/><path d="M6 18c-1-5 1-11 7-12l2 6-5 6z" fill="#a87838" stroke="#532"/><path d="M15 12l4-9" stroke="#843" stroke-width="1.300"/></svg></i>
      <i class="la"><svg viewBox="0 0 22 22"><rect x="1" y="1" width="20" height="20" rx="3" fill="#3868a8"/><circle cx="12" cy="12" r="6" fill="#e88820"/><circle cx="12" cy="12" r="2.500" fill="#244a88"/><path d="M3 10h6" stroke="#e88820" stroke-width="2"/></svg></i>
    </div>
    <div class="tasks">
      <span class="task act"><svg viewBox="0 0 18 18"><rect x="1" y="1" width="16" height="16" rx="2" fill="#d8b878"/><path d="M5 15c-1-4 1-9 6-10l2 5-4 5z" fill="#a87838" stroke="#532"/></svg>Nuovo documento 1 - Ink...</span>
      <span class="task"><svg viewBox="0 0 18 18"><circle cx="9" cy="11" r="5" fill="none" stroke="#888" stroke-width="1.200"/><path d="M4 3l5-1 5 1" stroke="#c04040" fill="none"/><path d="M4 11h10" stroke="#aaa"/></svg>Regolazione del volume</span>
      <span class="task"><svg viewBox="0 0 18 18"><rect x="2" y="2" width="14" height="14" rx="1" fill="#15151c"/><path d="M4 6l3 2.500L4 11M8 11h4" fill="none" stroke="#eee"/></svg>Terminale</span>
    </div>
    <div class="tray">
      <i class="ty"><svg viewBox="0 0 18 18"><path d="M1 7h3l4-3v10l-4-3H1z" fill="#444"/><path d="M11 5c2 2 2 6 0 8M14 3c3 3 3 9 0 12" fill="none" stroke="#444" stroke-width="1.300"/></svg></i>
      <i class="ty ty2"><svg viewBox="0 0 18 18"><path d="M3 11v5M7 8v8M11 5v11M15 2v14" stroke="#444" stroke-width="2.600"/></svg></i>
      <i class="ty"><svg viewBox="0 0 18 18"><path d="M9 1l7 2v6c0 4-3 7-7 8-4-1-7-4-7-8V3z" fill="#b8c8dc" stroke="#99a"/><circle cx="9" cy="9" r="5" fill="#3878c8"/><path d="M9 6v1M9 8.500V12" stroke="#fff" stroke-width="1.500"/></svg></i>
      <i class="ty"><svg viewBox="0 0 18 18"><rect x="1" y="4" width="16" height="11" fill="#ccc" stroke="#aaa"/><path d="M1 4l8 6 8-6" fill="none" stroke="#eee"/></svg></i>
      <i class="ty"><svg viewBox="0 0 18 18"><path d="M10 2l6 6-3 1-3 3-1 2-5-5 2-1 3-3zM6 11l-5 6" fill="#333" stroke="#222"/></svg></i>
      <i class="ty"><svg viewBox="0 0 18 18"><rect x="1" y="4" width="15" height="10" fill="#6aa43c" stroke="#222" stroke-width="1.400"/><rect x="16" y="7" width="2" height="4" fill="#222"/><path d="M5 9h3l-1 3 4-4H8l1-2z" fill="#123"/></svg></i>
      <span class="pager"><b></b><b></b></span>
    </div>
    <div class="clock"><div>20:43</div><div>sab, 10/11/12</div></div>
  </footer>
</div>
</body>
</html>
```
FILE: styles.css
```css
*{box-sizing:border-box}
html,body{margin:0;padding:0}
body{width:1280px;height:726px;overflow:hidden;background:#d8d8d8;font-family:"DejaVu Sans",sans-serif;font-size:11px;letter-spacing:.14px;color:#333}
i,b{font-style:normal;font-weight:normal}
svg{display:block}
.defs{position:absolute}
u{text-decoration-thickness:1px;text-underline-offset:1px}
.win{width:1280px;height:726px;display:flex;flex-direction:column;overflow:hidden;filter:blur(.3px)}

.titlebar{height:22px;flex:none;display:flex;align-items:stretch;background:#dadada;border-top:2px solid #111;border-bottom:2px solid #555;border-left:2px solid #222}
.title{width:201px;background:#a6c97e;color:#eef5dc;font-weight:bold;font-size:10.500px;letter-spacing:.45px;line-height:18px;white-space:nowrap}
.dither{width:32px;background-image:radial-gradient(#a6c97e 30%,transparent 40%);background-size:7px 7px;background-position:0 3px}
.winbtns{margin-left:auto;display:flex;gap:1px;padding-top:3px}
.wb{width:11px;height:13px}
.winbtns .wb:last-child{width:7px;overflow:hidden}
.wb svg{width:11px;height:13px}

.menubar{height:22px;flex:none;display:flex;align-items:center;gap:13.500px;padding-left:3px;background:#dbdbdb;border-left:2px solid #222;white-space:nowrap;letter-spacing:0}
.cmdbar{height:33px;flex:none;display:flex;align-items:center;padding-left:7px;background:linear-gradient(#d6d6d6,#e6e6e6);border-left:2px solid #222;border-bottom:1px solid #ababab}
.ti{width:26.600px;height:26px;flex:none;display:flex;align-items:center;justify-content:center}
.ti svg{width:19px;height:19px}
.sp{width:10.900px;flex:none;height:20px;background:linear-gradient(#c8c8c8,#c8c8c8) center/1px 100% no-repeat}
.dim{opacity:.55}
.tee{font-family:"Liberation Serif",serif;font-weight:bold;font-size:23px;line-height:26px;color:#111}

.ctlbar{height:45px;flex:none;display:flex;align-items:center;padding-left:7px;background:linear-gradient(#e6e6e6,#d4d4d4);border-left:2px solid #222;border-bottom:1px solid #b0b0b0}
.tc{width:32.500px;flex:none;display:flex;justify-content:center}
.tc svg{width:18px;height:18px}
.spc{width:9.500px;flex:none;height:24px;background:linear-gradient(#c4c4c4,#c4c4c4) center/1px 100% no-repeat}
.spc2{width:11px}
.spd{width:11px;flex:none;height:24px;background:linear-gradient(#c4c4c4,#c4c4c4) center/1px 100% no-repeat}
.cl{width:24px;padding-right:5px;text-align:right;color:#aaa;flex:none}
.clx{width:20px}
.clw{width:26px}
.clh{width:30px}
.spin{display:flex;width:60px;height:24px;border:1px solid #bdbdbd;border-radius:3px;color:#a5a5a5;background:#dcdcdc;overflow:hidden;flex:none}
.val{width:46px;padding-left:3px;line-height:22px;font-size:10.500px;letter-spacing:0;overflow:hidden;white-space:nowrap;flex:none}
.arr{flex:1;font-size:7px;line-height:9px;text-align:center;padding-top:3px;border-left:1px solid #ccc;color:#999}
.lock{width:16px;margin-left:9px;flex:none}
.combo{display:flex;justify-content:space-between;align-items:center;background:linear-gradient(#fff,#eee);border:1px solid #999;border-radius:4px;color:#333;flex:none}
.px{width:48px;height:28px;margin-left:3px;padding:0 6px}
.arr2{font-size:7px;line-height:8px;text-align:center;color:#444}
.spe{width:17px;flex:none;height:24px;background:linear-gradient(#c4c4c4,#c4c4c4) center/1px 100% no-repeat}
.prop{width:63px;margin-left:4px;flex:none}
.toggles{display:flex;gap:2px}
.tog{width:30px;height:35px;border:1px solid #8f8f8f;border-radius:4px;background:linear-gradient(#d8d8d8,#a8a8a8);display:flex;align-items:center;justify-content:center}
.tog svg{width:18px;height:18px}

.main{height:516px;flex:none;display:grid;grid-template-columns:32px 14px 744px 16px 8px 436px 28px;grid-template-rows:15px 483px 18px;background:#d8d8d8;border-left:2px solid #222}
.toprul{grid-column:1/4;grid-row:1;display:flex;padding-left:74px;font-size:8.500px;letter-spacing:0;line-height:9px;color:#444;background:repeating-linear-gradient(90deg,#555 0,#555 1px,transparent 1px,transparent 22.520px) 2px 100%/100% 5px no-repeat,linear-gradient(#dedede,#cfcfcf);overflow:hidden}
.rl{width:112.600px;flex:none;height:15px;padding-left:2px;border-left:1px solid #444}
.corner{grid-column:4;grid-row:1;display:flex;justify-content:center;align-items:center;background:#d8d8d8}
.corner svg{width:15px;height:15px}

.tools{grid-column:1;grid-row:2/4;display:flex;flex-direction:column;align-items:flex-start;background:#d8d8d8}
.tool{width:27px;height:30.100px;flex:none;display:flex;align-items:center;justify-content:center}
.tool svg{width:24px;height:24px}
.tool.on{height:28px;margin-bottom:2.100px;background:linear-gradient(#cdcdcd,#a9a9a9);border:1px solid #999;border-radius:3px}
.aglyph{font-weight:bold;font-size:24px;line-height:24px;color:#111}
.tool svg.caret{width:4px;height:22px;margin-left:-1px}
.toolmore{font-size:10px;color:#777;margin:21px 0 0 10px}

.vrul{grid-column:2;grid-row:2;display:flex;flex-direction:column;padding:21px 0 0 0;background:repeating-linear-gradient(180deg,#555 0,#555 1px,transparent 1px,transparent 22.600px) 100% 0/5px 100% no-repeat,linear-gradient(90deg,#dedede,#cfcfcf);font-size:8.500px;letter-spacing:0;line-height:8.500px;color:#444;overflow:hidden}
.vl{height:113px;flex:none;text-align:center;width:8px}

.canvas{grid-column:3;grid-row:2;background:#fff;position:relative;overflow:hidden}
.page{position:absolute;left:142px;top:10px;width:465px;height:464px;background:#fff;border:1px solid #333;box-shadow:2px 2px 0 #666}
.artwork{position:absolute;left:186px;top:53px;width:376px;height:377px}

.vscroll{grid-column:4;grid-row:2;display:flex;flex-direction:column;align-items:center;background:linear-gradient(90deg,#f2f2f2,#fff)}
.sa{font-size:7px;line-height:10px;color:#333;height:10px;margin-top:2px}
.sb{margin-top:auto;margin-bottom:2px}
.vthumb{width:11px;height:140px;margin-top:160px;background:linear-gradient(90deg,#e4e4e4,#cfcfcf);border:1px solid #9a9a9a;border-radius:6px}
.hscroll{grid-column:3;grid-row:3;display:flex;align-items:center;padding-left:4px;background:linear-gradient(#eee,#fff)}
.sh{font-size:7px;color:#555;width:10px;flex:none}
.hthumb{width:350px;height:11px;margin-left:182px;background:linear-gradient(#e4e4e4,#d0d0d0);border:1px solid #9a9a9a;border-radius:6px}
.sr{margin-left:auto;margin-right:0}
.sizer{grid-column:4;grid-row:3;padding:2px;background:#d8d8d8}
.handle{grid-column:5;grid-row:1/4;background:linear-gradient(#aaa,#aaa) 50% 50%/1px 12px no-repeat}

.dock{grid-column:6;grid-row:1/4;display:flex;flex-direction:column;background:#d8d8d8;border-right:1px solid #c2c2c2}
.docktitle{height:24px;margin:1px 2px 0 4px;flex:none;background:#8b8b8b;display:flex;align-items:center;justify-content:space-between;padding:0 5px 0 3px;color:#222;letter-spacing:.3px}
.dtb{display:flex;gap:10px}
.dtb svg{width:12px;height:12px}
.dockbody{display:flex;margin-top:5px;padding-left:7px;height:358px;flex:none}
.leftcol{width:77px;flex:none}
.fontlist{height:328px;background:#fff;border-radius:2px 2px 0 0}
.flhead{height:21px;line-height:22px;padding-left:2px;border-bottom:1px solid #aaa;background:linear-gradient(#fff,#f0f0f0);letter-spacing:.3px}
.flsel{height:21px;line-height:23px;padding-left:3px;background:#a6c97e;color:#e8f2d6}
.btn{font:inherit;letter-spacing:inherit;color:#333;background:linear-gradient(#fff,#e8e8e8);border:1px solid #999;border-radius:3px;padding:0;height:23px;white-space:nowrap}
.nuovo{display:flex;align-items:center;justify-content:center;gap:5px;width:75px;height:30px;margin:1px 0 0 1px}
.nuovo svg{width:18px;height:18px}
.rightcol{width:342px;margin-left:2px;flex:none}
.tabs{height:29px;display:flex;align-items:flex-end;padding-left:1px}
.tab{height:24px;line-height:24px;padding:0 3px 0 4px;background:#cfcfcf;color:#777;border:1px solid #c0c0c0;border-bottom:0;white-space:nowrap;letter-spacing:.12px}
.tab.act{height:28px;line-height:25px;background:#fff;color:#333;padding:0 3px}
.panel{height:301px;background:#fff;border:1px solid #ccc;padding:2px 0 0 1px;display:flex;flex-direction:column}
.missing{display:flex;align-items:center;gap:2px;white-space:nowrap;flex:none}
.mlabel{width:83px;flex:none;margin-right:-1px;letter-spacing:.1px}
.missing .btn:nth-child(2){width:103px}
.missing .btn:nth-child(3){width:67px}
.table{display:flex;flex:1;margin-top:2px;min-height:0}
.tblmain{width:323px;flex:none}
.thead{display:flex;height:21px;line-height:22px;background:linear-gradient(#fff,#dcdcdc);border-bottom:1px solid #bbb}
.c1{width:94px;padding-left:2px;flex:none;letter-spacing:.2px}
.thead .c2{border-left:1px solid #bbb;padding-left:2px;letter-spacing:.3px}
.trow{display:flex;height:22px;line-height:24px}
.trow .c1{padding-left:4px}
.trow .c2{padding-left:4px}
.tscroll{width:16px;flex:none;display:flex;flex-direction:column;align-items:center;border:1px solid #ddd;background:#f6f6f6}
.tscroll .sa{color:#ccc}
.tthumb{width:11px;height:244px;margin-top:1px;background:linear-gradient(90deg,#f0f0f0,#ddd);border:1px solid #999;border-radius:6px}
.actions{display:flex;gap:3px;margin-top:2px;padding-left:3px}
.actions .btn:first-child{width:87px}
.actions .btn:last-child{width:177px;letter-spacing:.25px}
.strip{height:48px;width:414px;margin:10px 0 0 16px;background:#000;display:flex;position:relative;flex:none;overflow:hidden}
.strip span{width:48.250px;flex:none;border-right:1px solid #aaa}
.strip span:last-of-type{border:0}
.cursor{position:absolute;left:206px;top:17px;width:10px;height:16px}
.previewrow{display:flex;align-items:center;margin-top:11px;padding-left:50px;flex:none}
.previewrow label{width:141px;flex:none;letter-spacing:.25px}
.entry{width:238px;height:21px;line-height:20px;background:#fff;border:1px solid #aaa;border-radius:3px;padding-left:3px}
.dockfoot{margin:5px 2px 0 2px;border-top:1px solid #aaa;display:flex;justify-content:center;padding-top:3px}
.grip{width:7px;height:4px;background:repeating-linear-gradient(90deg,#aaa 0,#aaa 1px,transparent 1px,transparent 3px)}

.snapbar{grid-column:7;grid-row:1/4;display:flex;flex-direction:column;align-items:flex-start;padding:15px 0 0 10px;border-left:1px solid #c0c0c0;background:#d8d8d8}
.rb{display:block;width:18px;height:18px;flex:none}
.rb svg{width:18px;height:18px}
.rb.on{height:23px;width:20px;padding-top:2px;background:linear-gradient(#d6d6d6,#a8a8a8);border:1px solid #8f8f8f;border-right:0;border-radius:4px 0 0 4px}
.rb.on svg{margin-left:1px}
.rb.blue{margin-left:-3px;width:23px;padding-left:3px;background:linear-gradient(#cfcfcf,#b8b8b8)}
.fade{opacity:.55}
.rs{height:1px;width:12px;background:#c2c2c2;flex:none}
.r0{margin-top:2px}.r4{margin-top:5px}.r5{margin-top:5px}.r6{margin-top:6px}.r7{margin-top:7px}.r8{margin-top:8px}.r11{margin-top:11px}.r12{margin-top:12px}.r14{margin-top:14px}

.palette{height:17px;flex:none;display:flex;background:#c0c0c0;border-left:2px solid #222;border-bottom:1px solid #999;overflow:hidden}
.palette span{width:15.100px;flex:none;height:16px}
.palette .noswatch{width:11px}
.palscroll{height:14px;flex:none;display:flex;align-items:center;padding-left:10px;background:linear-gradient(#f0f0f0,#fff);border-left:2px solid #222;width:1276px;border-bottom:1px solid #bbb}
.palthumb{width:241px;height:11px;background:linear-gradient(#e2e2e2,#d0d0d0);border:1px solid #9a9a9a;border-radius:6px}
.palarrow{margin-left:auto}

.status{height:27px;flex:none;display:flex;align-items:center;background:#d8d8d8;border-left:2px solid #222;white-space:nowrap}
.fs{width:116px;margin-left:-3px;font-size:10.500px;line-height:12px;flex:none;letter-spacing:0}
.fs div{display:flex}
.fs span:first-child{width:86px}
.op{width:15px;flex:none}
.spin.small{width:34px;height:23px}
.spin.small .val{width:22px;padding-left:1px;font-size:10px;overflow:visible}
.si{width:16px;height:16px;flex:none}
.eye{margin-left:6px}
.lock2{margin-left:4px}
.lvl{width:80px;height:23px;padding:0 6px 0 7px;margin-left:2px;font-weight:bold;font-size:10.500px;letter-spacing:.1px}
.msg{margin-left:7px}
.coords{margin-left:auto;width:58px;line-height:12.500px;letter-spacing:0;flex:none;color:#444}
.coords div{display:flex;justify-content:space-between}
.zl{margin-left:9px;width:16px;flex:none}
.zoomspin{display:flex;justify-content:flex-end;width:51px;height:22px;line-height:20px;margin-right:12px;background:#fff;border:1px solid #aaa;border-radius:3px;flex:none}
.zoomspin .arr{flex:none;width:13px;margin-left:5px;padding-top:2px;background:#eee;color:#555}

.taskbar{height:30px;flex:none;display:flex;align-items:center;background:linear-gradient(#e0e0e0,#d0d0d0);white-space:nowrap}
.menubtn{display:flex;align-items:center;gap:3px;width:66px;padding-left:5px;flex:none}
.menubtn svg{width:19px;height:19px}
.launch{display:flex;width:364px;flex:none}
.la{width:30.200px;flex:none;display:flex;justify-content:center}
.la svg{width:21px;height:21px}
.tasks{display:flex;gap:2px;flex:none}
.task{width:187px;height:28px;display:flex;align-items:center;gap:6px;padding-left:2px;background:linear-gradient(#fff,#f0f0f0);border:1px solid #aaa;border-radius:3px;overflow:hidden}
.task svg{width:16px;height:16px;flex:none}
.task.act{background:linear-gradient(#a8a8a8,#b8b8b8);border-color:#888;color:#222;padding-left:1px;gap:7px;letter-spacing:.35px}
.tray{display:flex;align-items:center;margin-left:31.750px;flex:none}
.ty{width:22.500px;flex:none;display:flex;justify-content:center}
.ty2{margin-left:5.500px}
.ty svg{width:17px;height:17px}
.pager{width:22px;height:30px;margin-left:2px;display:flex;flex-direction:column}
.pager b:first-child{height:11px;background:#e2ecd2}
.pager b:last-child{flex:1;background:#999}
.clock{text-align:center;flex:1;padding-left:5px;font-size:11.500px;line-height:14px;letter-spacing:.1px}
```
